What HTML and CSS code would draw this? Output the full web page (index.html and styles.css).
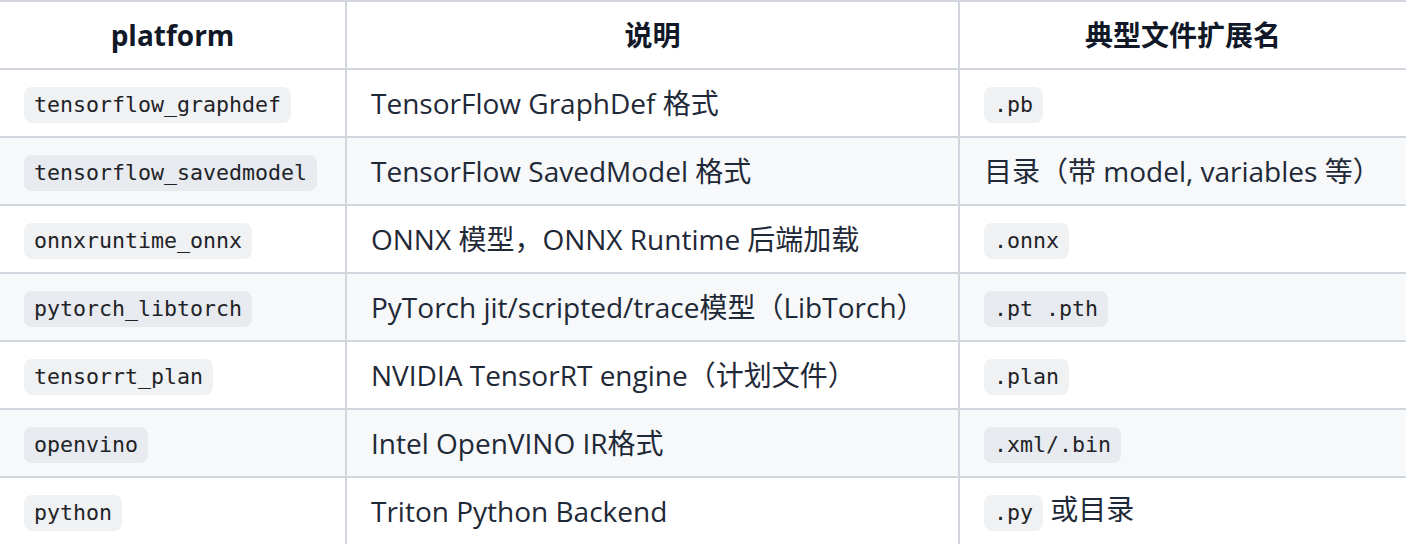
FILE: index.html
```html
<!DOCTYPE html>
<html lang="zh-CN">
<head>
<meta charset="utf-8">
<title>Triton platform</title>
<link rel="stylesheet" href="styles.css">
</head>
<body>
<table class="grid">
  <colgroup>
    <col class="c1">
    <col class="c2">
    <col class="c3">
  </colgroup>
  <thead>
    <tr>
      <th>platform</th>
      <th>说明</th>
      <th>典型文件扩展名</th>
    </tr>
  </thead>
  <tbody>
    <tr>
      <td><code>tensorflow_graphdef</code></td>
      <td>TensorFlow GraphDef 格式</td>
      <td><code>.pb</code></td>
    </tr>
    <tr>
      <td><code>tensorflow_savedmodel</code></td>
      <td>TensorFlow SavedModel 格式</td>
      <td>目录（带 model, variables 等）</td>
    </tr>
    <tr>
      <td><code>onnxruntime_onnx</code></td>
      <td>ONNX 模型，ONNX Runtime 后端加载</td>
      <td><code>.onnx</code></td>
    </tr>
    <tr>
      <td><code>pytorch_libtorch</code></td>
      <td>PyTorch jit/scripted/trace模型（LibTorch）</td>
      <td><code>.pt .pth</code></td>
    </tr>
    <tr>
      <td><code>tensorrt_plan</code></td>
      <td>NVIDIA TensorRT engine（计划文件）</td>
      <td><code>.plan</code></td>
    </tr>
    <tr>
      <td><code>openvino</code></td>
      <td>Intel OpenVINO IR格式</td>
      <td><code>.xml/.bin</code></td>
    </tr>
    <tr>
      <td><code>python</code></td>
      <td>Triton Python Backend</td>
      <td><code>.py</code> 或目录</td>
    </tr>
  </tbody>
</table>
</body>
</html>
```

FILE: styles.css
```css
html, body {
  margin: 0;
  padding: 0;
  background: #ffffff;
}

body {
  font-family: "Open Sans", "Noto Sans CJK SC", sans-serif;
  color: #1f2937;
}

.grid {
  width: 1406px;
  table-layout: fixed;
  border-collapse: separate;
  border-spacing: 0;
  border-top: 2px solid #d1d5de;
}

.c1 { width: 347px; }
.c2 { width: 613px; }
.c3 { width: 446px; }

.grid th,
.grid td {
  height: 66px;
  padding: 0 24px;
  border-bottom: 2px solid #d1d5de;
  vertical-align: middle;
  font-size: 28px;
  line-height: 36px;
  white-space: nowrap;
  overflow: hidden;
}

.grid th:not(:last-child),
.grid td:not(:last-child) {
  border-right: 2px solid #d1d5de;
}

.grid th {
  font-weight: 700;
  color: #111827;
  text-align: center;
}

.grid td {
  text-align: left;
}

.grid tbody tr:nth-child(even) td {
  background: #f6f8fa;
}

.grid code {
  font-family: "DejaVu Sans Mono", "Liberation Mono", monospace;
  font-size: 21.6px;
  line-height: 36px;
  display: inline-block;
  padding: 0 10px;
  border-radius: 8px;
  background: rgba(175, 184, 193, 0.2);
  color: #1f2328;
  vertical-align: middle;
}
```
